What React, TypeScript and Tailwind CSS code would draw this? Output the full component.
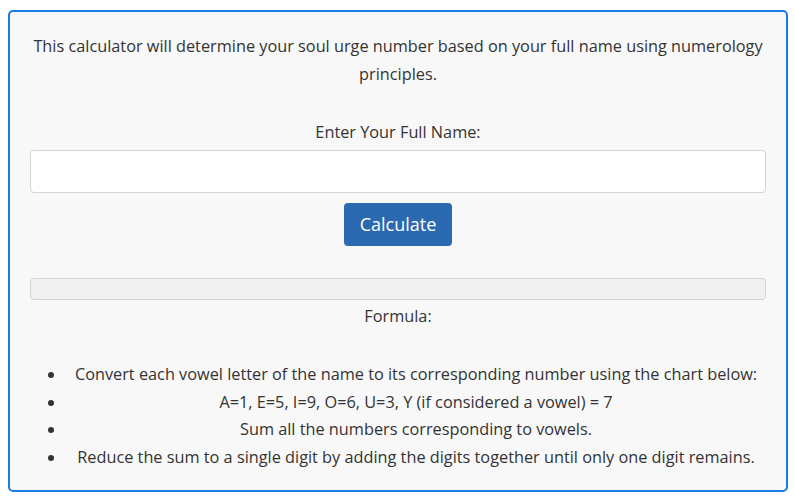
export default function App() {
  return (
    <div className="bg-white w-[795px] h-[498px] pt-[10px] pl-[8px]" style={{ fontFamily: '"Open Sans", "Noto Sans", sans-serif' }}>
      <div className="w-[780px] h-[482px] border-2 border-[#1a7be6] rounded-[5px] bg-[#f8f8f8] px-[20px] pt-[20px] text-[#333] text-[16.3px] text-center">
        <p className="leading-[28px]">
          This calculator will determine your soul urge number based on your full name using numerology principles.
        </p>
        <label className="block mt-[30px] leading-[28px]">Enter Your Full Name:</label>
        <input type="text" className="block mt-[4px] w-full h-[43px] bg-white border border-[#ced4da] rounded-[4px]" />
        <button className="mt-[10px] w-[108px] h-[43px] bg-[#2b6ab0] text-white text-[18px] rounded-[4px]">Calculate</button>
        <div className="mt-[32px] h-[22px] bg-[#f0f0f0] border border-[#d4d4d4] rounded-[4px]"></div>
        <div className="mt-[2px] leading-[28px]">Formula:</div>
        <ul className="mt-[31px] list-disc pl-[36px] leading-[27.5px]">
          <li>Convert each vowel letter of the name to its corresponding number using the chart below:</li>
          <li>A=1, E=5, I=9, O=6, U=3, Y (if considered a vowel) = 7</li>
          <li>Sum all the numbers corresponding to vowels.</li>
          <li>Reduce the sum to a single digit by adding the digits together until only one digit remains.</li>
        </ul>
      </div>
    </div>
  );
}
